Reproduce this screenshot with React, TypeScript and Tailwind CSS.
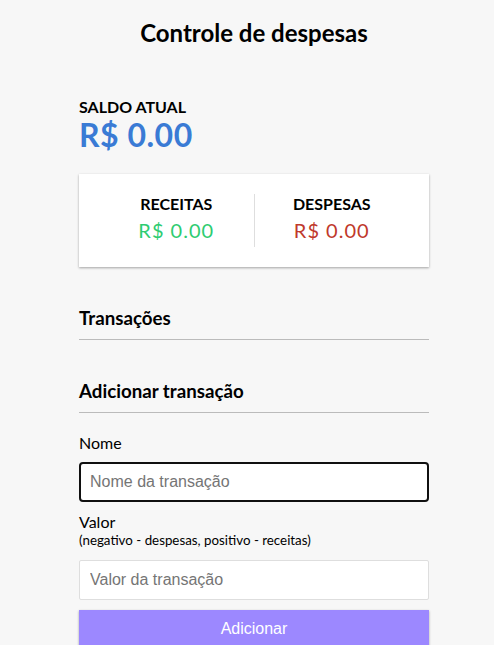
import React from "react";

export default function App() {
  return (
    <div className="min-h-screen bg-[#f7f7f7] pl-[14px] font-['Lato','Noto_Sans',sans-serif] text-black">
      <div className="flex flex-col items-center">
        <h2 className="mt-[18px] mb-[20px] text-[24px] leading-[29px] font-bold">Controle de despesas</h2>
        <div className="mt-[30px] w-[350px]">
          <h4 className="text-[16px] leading-[19px] font-bold uppercase">Saldo atual</h4>
          <h1 className="text-[32px] leading-[38px] font-bold tracking-[0.5px] text-[#3a7bd5]">R$ 0.00</h1>

          <div className="mt-[20px] flex bg-white p-[20px] shadow-[0_1px_3px_rgba(0,0,0,0.12),0_1px_2px_rgba(0,0,0,0.24)]">
            <div className="flex-1 border-r border-[#dedede] text-center">
              <h4 className="text-[16px] leading-[19px] font-bold uppercase">Receitas</h4>
              <p className="my-[5px] text-[20px] leading-[24px] tracking-[1px] text-[#2ecc71]">R$ 0.00</p>
            </div>
            <div className="flex-1 text-center">
              <h4 className="text-[16px] leading-[19px] font-bold uppercase">Despesas</h4>
              <p className="my-[5px] text-[20px] leading-[24px] tracking-[1px] text-[#c0392b]">R$ 0.00</p>
            </div>
          </div>

          <h3 className="mt-[40px] border-b border-[#bbb] pb-[10px] text-[18.72px] leading-[22px] font-bold">Transações</h3>

          <h3 className="mt-[40px] border-b border-[#bbb] pb-[10px] text-[18.72px] leading-[22px] font-bold">Adicionar transação</h3>

          <div className="mt-[10px]">
            <label className="my-[10px] inline-block text-[16px] leading-[19px]">Nome</label>
            <input
              type="text"
              placeholder="Nome da transação"
              className="block w-full rounded-[4px] border-2 border-[#101010] bg-white p-[9px] font-['Liberation_Sans',Arial,sans-serif] text-[16px] leading-[18px] outline-none placeholder:text-[#757575]"
            />
          </div>
          <div>
            <label className="my-[10px] inline-block text-[16px] leading-[19px]">
              <span className="block">Valor</span>
              <small className="block text-[13.33px] leading-[19px]">(negativo - despesas, positivo - receitas)</small>
            </label>
            <input
              type="text"
              placeholder="Valor da transação"
              className="block w-full rounded-[2px] border border-[#dedede] bg-white p-[10px] font-['Liberation_Sans',Arial,sans-serif] text-[16px] leading-[18px] outline-none placeholder:text-[#757575]"
            />
          </div>
          <button className="mt-[10px] mb-[30px] block w-full bg-[#9c88ff] p-[10px] font-['Liberation_Sans',Arial,sans-serif] text-[16px] leading-[18px] text-white shadow-[0_1px_3px_rgba(0,0,0,0.12),0_1px_2px_rgba(0,0,0,0.24)]">
            Adicionar
          </button>
        </div>
      </div>
    </div>
  );
}
